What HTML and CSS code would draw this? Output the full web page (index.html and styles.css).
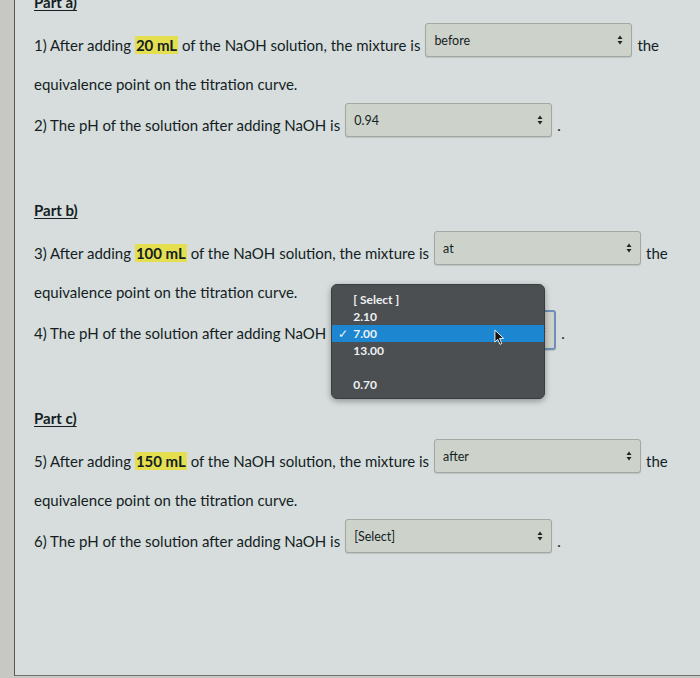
FILE: index.html
```html
<!DOCTYPE html>
<html>
<head>
<meta charset="utf-8">
<link rel="stylesheet" href="styles.css">
</head>
<body>
<div class="sheet">
  <main class="content">
    <section class="part first">
      <div class="title"><u>Part a)</u></div>
      <div class="q">1) After adding&nbsp;<b class="hl">20 mL</b>&nbsp;of the NaOH solution, the mixture is
        <span class="sel"><span class="val">before</span><svg class="arr" viewBox="0 0 6 10"><path d="M3 0.5 L5.5 4 H0.5Z M3 9.5 L5.5 6 H0.5Z" fill="#222"/></svg></span>the</div>
      <div class="cont">equivalence point on the titration curve.</div>
      <div class="q q2">2) The pH of the solution after adding NaOH is
        <span class="sel"><span class="val">0.94</span><svg class="arr" viewBox="0 0 6 10"><path d="M3 0.5 L5.5 4 H0.5Z M3 9.5 L5.5 6 H0.5Z" fill="#222"/></svg></span>.</div>
    </section>

    <section class="part">
      <div class="title"><u>Part b)</u></div>
      <div class="q">3) After adding&nbsp;<b class="hl">100 mL</b>&nbsp;of the NaOH solution, the mixture is
        <span class="sel"><span class="val">at</span><svg class="arr" viewBox="0 0 6 10"><path d="M3 0.5 L5.5 4 H0.5Z M3 9.5 L5.5 6 H0.5Z" fill="#222"/></svg></span>the</div>
      <div class="cont">equivalence point on the titration curve.</div>
      <div class="q q2">4) The pH of the solution after adding NaOH
        <span class="sel focus"><svg class="arr" viewBox="0 0 6 10"><path d="M3 0.5 L5.5 4 H0.5Z M3 9.5 L5.5 6 H0.5Z" fill="#222"/></svg>
          <span class="menu">
            <span class="opt"><span class="check"></span>[ Select ]</span>
            <span class="opt"><span class="check"></span>2.10</span>
            <span class="opt on"><span class="check">✓</span>7.00</span>
            <span class="opt"><span class="check"></span>13.00</span>
            <span class="opt"></span>
            <span class="opt"><span class="check"></span>0.70</span>
            <svg class="cursor" viewBox="0 0 12 18"><path d="M1 1 L1 14 L4 11 L6.5 16.5 L8.5 15.5 L6 10 L10.5 10 Z" fill="#111" stroke="#fff" stroke-width="1"/></svg>
          </span>
        </span>.</div>
    </section>

    <section class="part">
      <div class="title"><u>Part c)</u></div>
      <div class="q">5) After adding&nbsp;<b class="hl">150 mL</b>&nbsp;of the NaOH solution, the mixture is
        <span class="sel"><span class="val">after</span><svg class="arr" viewBox="0 0 6 10"><path d="M3 0.5 L5.5 4 H0.5Z M3 9.5 L5.5 6 H0.5Z" fill="#222"/></svg></span>the</div>
      <div class="cont">equivalence point on the titration curve.</div>
      <div class="q q2">6) The pH of the solution after adding NaOH is
        <span class="sel"><span class="val">[Select]</span><svg class="arr" viewBox="0 0 6 10"><path d="M3 0.5 L5.5 4 H0.5Z M3 9.5 L5.5 6 H0.5Z" fill="#222"/></svg></span>.</div>
    </section>
  </main>
</div>
</body>
</html>
```

FILE: styles.css
```css
html, body {
  margin: 0;
  padding: 0;
  background: #c7c8c3;
}
body {
  width: 700px;
  height: 678px;
  overflow: hidden;
  font-family: Lato, "Open Sans", sans-serif;
  color: #141e24;
}
.sheet {
  margin-left: 14px;
  height: 675px;
  border-left: 1px solid #55595a;
  border-bottom: 1px solid #6e7272;
  background: #d6dddc;
  overflow: hidden;
}
.content {
  padding-left: 19px;
  font-size: 15px;
}
.part {
  margin-top: 55px;
}
.part.first {
  margin-top: -8px;
}
.title {
  height: 20px;
  line-height: 20px;
  font-weight: 700;
}
.title u {
  text-decoration-thickness: 1px;
  text-underline-offset: 2px;
}
.q {
  height: 40px;
  display: flex;
  align-items: center;
  white-space: nowrap;
  margin-top: 13px;
}
.q2 {
  margin-top: 2px;
}
.cont {
  height: 38px;
  line-height: 38px;
}
b.hl {
  background: #e3df4e;
  font-weight: 700;
  padding: 0 1px;
}
.sel {
  position: relative;
  width: 207px;
  height: 34px;
  margin: -10px 5px 0 5px;
  border: 1px solid #a3a7a0;
  border-radius: 3px;
  background: #cdd2ca;
  box-shadow: 0 1px 1px rgba(0,0,0,0.12);
  display: flex;
  align-items: center;
  justify-content: space-between;
  padding: 0 8px 0 8px;
  box-sizing: border-box;
  font-size: 12.5px;
}
.sel.focus {
  margin-left: 20px;
  width: 210px;
  height: 40px;
  margin-top: -6px;
  border: 2px solid #6f8fb8;
  justify-content: flex-end;
}
.arr {
  width: 6px;
  height: 10px;
}
.menu {
  position: absolute;
  left: -17px;
  top: -28px;
  width: 214px;
  height: 115px;
  box-sizing: border-box;
  padding-top: 6px;
  background: #4b4f52;
  border: 1px solid #3a3d3f;
  border-radius: 6px;
  display: flex;
  flex-direction: column;
  box-shadow: 0 2px 6px rgba(0,0,0,0.35);
  z-index: 5;
}
.opt {
  height: 17px;
  line-height: 17px;
  padding-left: 6px;
  display: flex;
  color: #eef1f2;
  font-size: 12px;
  font-weight: 700;
}
.opt.on {
  background: #1c86d0;
}
.check {
  width: 15px;
  flex: none;
  font-weight: 400;
}
.cursor {
  position: absolute;
  left: 162px;
  top: 44px;
  width: 11px;
  height: 17px;
}
```
